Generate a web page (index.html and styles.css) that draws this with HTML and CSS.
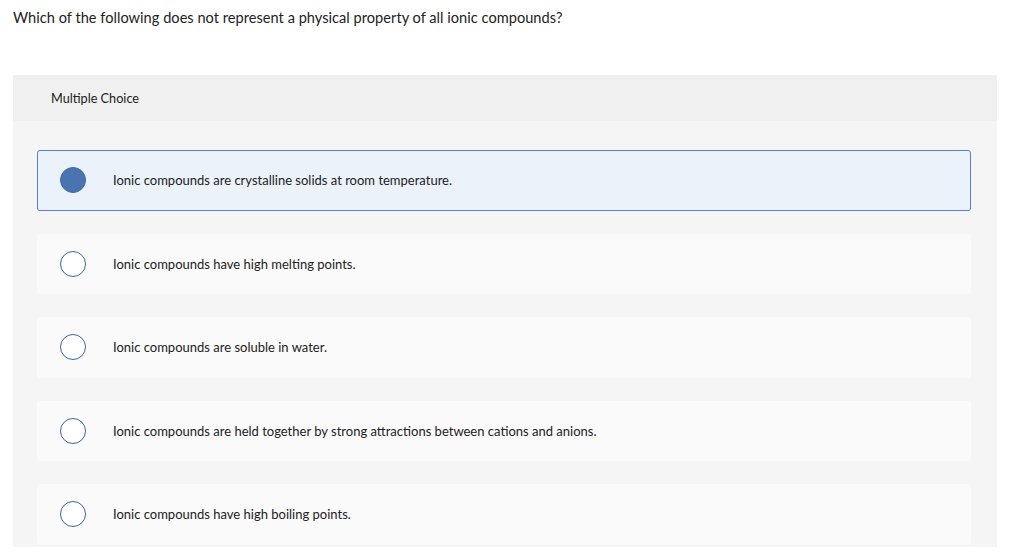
FILE: index.html
```html
<!DOCTYPE html>
<html lang="en">
<head>
<meta charset="utf-8">
<title>Multiple Choice</title>
<link rel="stylesheet" href="styles.css">
</head>
<body>
<p class="question">Which of the following does not represent a physical property of all ionic compounds?</p>
<section class="panel">
  <header class="panel-head">Multiple Choice</header>
  <div class="options">
    <label class="option selected"><span class="radio"></span><span class="text">Ionic compounds are crystalline solids at room temperature.</span></label>
    <label class="option"><span class="radio"></span><span class="text">Ionic compounds have high melting points.</span></label>
    <label class="option"><span class="radio"></span><span class="text">Ionic compounds are soluble in water.</span></label>
    <label class="option"><span class="radio"></span><span class="text">Ionic compounds are held together by strong attractions between cations and anions.</span></label>
    <label class="option"><span class="radio"></span><span class="text">Ionic compounds have high boiling points.</span></label>
  </div>
</section>
</body>
</html>
```
FILE: styles.css
```css
html, body {
  margin: 0;
  padding: 0;
  background: #ffffff;
}
body {
  font-family: "Lato", "Open Sans", sans-serif;
  color: #222;
  padding: 0 27px 0 13px;
  overflow: hidden;
}
.question {
  margin: 0;
  padding-top: 9px;
  height: 75px;
  box-sizing: border-box;
  font-size: 14.6px;
  line-height: 17px;
  letter-spacing: 0.02px;
}
.panel {
  background: #f5f5f5;
  padding-bottom: 2px;
}
.panel-head {
  background: #f0f0f0;
  height: 46px;
  display: flex;
  align-items: center;
  padding-left: 38px;
  font-size: 12.7px;
}
.options {
  display: flex;
  flex-direction: column;
  gap: 23px;
  padding: 29px 26px 0 24px;
}
.option {
  display: flex;
  align-items: center;
  height: 60.5px;
  box-sizing: border-box;
  background: #fafafa;
  border: 1px solid transparent;
  border-radius: 3px;
  padding-left: 22px;
  font-size: 13px;
}
.option.selected {
  background: #ebf2fa;
  border-color: #5b83bb;
}
.radio {
  width: 26px;
  height: 26px;
  box-sizing: border-box;
  border-radius: 50%;
  border: 1.5px solid #3b659f;
  background: #fff;
  flex: none;
  margin-right: 27px;
}
.option.selected .radio {
  background: #4a73b2;
  border-color: #3f67a3;
}
.text {
  color: #222;
}
```
